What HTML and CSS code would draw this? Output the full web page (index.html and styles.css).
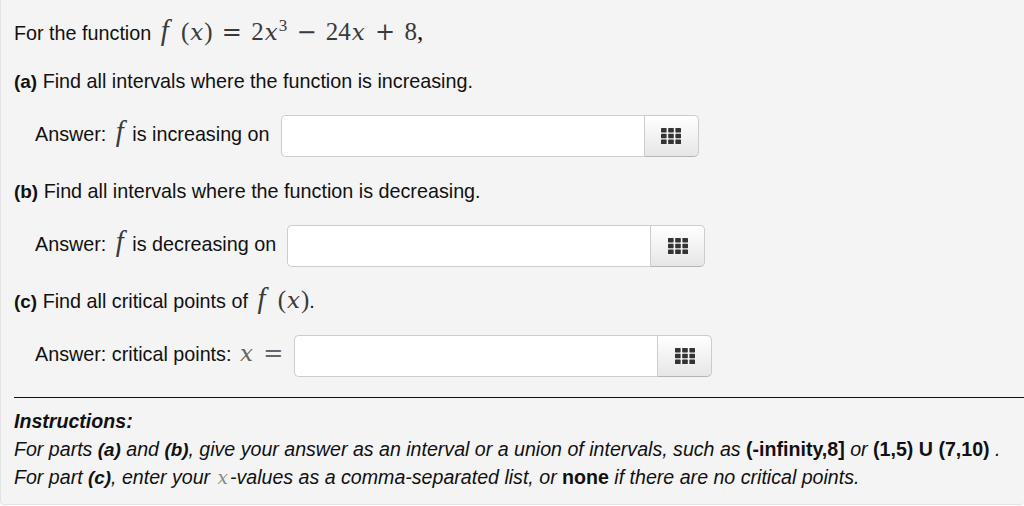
FILE: index.html
```html
<!DOCTYPE html>
<html>
<head>
  <meta charset="UTF-8" />
  <title>Question</title>
  <link rel="stylesheet" href="styles.css">
</head>
<body>
  <div class="container">
    <p class="line first">For the function <span class="math big"><i class="fn">f</i> (<i>x</i>) <span class="op">=</span> 2<i>x</i><sup>3</sup> <span class="op">−</span> 24<i>x</i> <span class="op">+</span> 8<span class="comma">,</span></span></p>
    <p class="line part"><b>(a)</b> Find all intervals where the function is increasing.</p>
    <div class="answer">
      <span class="label">Answer: <span class="math big"><i class="fn">f</i></span> is increasing on</span>
      <div class="field"><input type="text"><button type="button"><svg width="20" height="16" viewBox="0 0 20 16"><use href="#dots"/></svg></button></div>
    </div>
    <p class="line part"><b>(b)</b> Find all intervals where the function is decreasing.</p>
    <div class="answer">
      <span class="label">Answer: <span class="math big"><i class="fn">f</i></span> is decreasing on</span>
      <div class="field"><input type="text"><button type="button"><svg width="20" height="16" viewBox="0 0 20 16"><use href="#dots"/></svg></button></div>
    </div>
    <p class="line part"><b>(c)</b> Find all critical points of <span class="math big"><i class="fn">f</i> (<i>x</i>)</span>.</p>
    <div class="answer">
      <span class="label">Answer: critical points: <span class="math big faint"><i>x</i> <span class="op">=</span></span></span>
      <div class="field"><input type="text"><button type="button"><svg width="20" height="16" viewBox="0 0 20 16"><use href="#dots"/></svg></button></div>
    </div>
    <hr>
    <div class="instructions">
      <p><b class="title">Instructions:</b></p>
      <p>For parts <b>(a)</b> and <b>(b)</b>, give your answer as an interval or a union of intervals, such as <b class="up">(-infinity,8]</b> or <b class="up">(1,5) U (7,10)</b> .</p>
      <p>For part <b>(c)</b>, enter your <span class="math small"><i>x</i></span>-values as a comma-separated list, or <b class="up">none</b> if there are no critical points.</p>
    </div>
  </div>
  <svg width="0" height="0" class="defs">
    <g id="dots" fill="#333">
      <rect x="0" y="0" width="5.6" height="4.4" rx="0.6"/><rect x="7.2" y="0" width="5.6" height="4.4" rx="0.6"/><rect x="14.4" y="0" width="5.6" height="4.4" rx="0.6"/>
      <rect x="0" y="5.8" width="5.6" height="4.4" rx="0.6"/><rect x="7.2" y="5.8" width="5.6" height="4.4" rx="0.6"/><rect x="14.4" y="5.8" width="5.6" height="4.4" rx="0.6"/>
      <rect x="0" y="11.6" width="5.6" height="4.4" rx="0.6"/><rect x="7.2" y="11.6" width="5.6" height="4.4" rx="0.6"/><rect x="14.4" y="11.6" width="5.6" height="4.4" rx="0.6"/>
    </g>
  </svg>
</body>
</html>
```

FILE: styles.css
```css
body {
  margin: 0;
  background-color: #fff;
  font-family: "Liberation Sans", Arial, sans-serif;
  font-size: 19.75px;
  color: #111;
}

.defs {
  display: block;
}

.container {
  height: 505px;
  box-sizing: border-box;
  padding: 19px 0 0 13px;
  background-color: #f4f4f4;
  border-left: 1px solid #e3e3e3;
  border-bottom: 1px solid #e3e3e3;
  border-radius: 0 0 4px 4px;
}

p {
  margin: 0;
}

b {
  font-size: 0.96em;
  line-height: 0;
}

.line {
  height: 28px;
  line-height: 28px;
  white-space: nowrap;
}

.part {
  margin-top: 20px;
}

.math {
  font-family: "Liberation Serif", "DejaVu Serif", serif;
  color: #3a3a3a;
  line-height: 0;
}

.math i {
  font-family: "DejaVu Serif", serif;
  font-size: 0.92em;
  line-height: 0;
  margin: 0 1px;
}

.math .fn {
  font-family: "Liberation Serif", serif;
  font-size: 1.15em;
  margin: 0 3px 0 2px;
}

.big {
  font-size: 25px;
  word-spacing: 3px;
  margin-left: 2px;
}

.op {
  font-family: "DejaVu Serif", serif;
  font-size: 24px;
}

.comma {
  color: #111;
}

.faint {
  color: #666;
}

.small {
  font-size: 20px;
  color: #888;
}

.small i {
  margin: 0 2px;
}

.math sup {
  font-size: 17px;
  line-height: 0;
}

.answer {
  display: flex;
  align-items: center;
  gap: 11px;
  height: 42px;
  margin-top: 20px;
  margin-left: 21px;
  white-space: nowrap;
}

.label {
  margin-bottom: 3px;
}

.field {
  display: flex;
  height: 42px;
}

.field input {
  box-sizing: border-box;
  width: 363px;
  height: 42px;
  padding: 0;
  border: 1px solid #ccc;
  border-right: none;
  border-radius: 5px 0 0 5px;
  background-color: #fff;
}

.field button {
  box-sizing: border-box;
  width: 55px;
  height: 42px;
  padding: 0;
  display: flex;
  align-items: center;
  justify-content: center;
  border: 1px solid #ccc;
  border-bottom-color: #b5b5b5;
  border-radius: 0 5px 5px 0;
  background: linear-gradient(#fff, #e6e6e6);
}

hr {
  height: 1px;
  margin: 20px 0 0 0;
  border: none;
  background-color: #111;
}

.instructions {
  margin-top: 9px;
  font-size: 19.6px;
  font-style: italic;
  line-height: 28px;
  white-space: nowrap;
}

.title {
  font-size: 1em;
}

.up {
  font-style: normal;
  font-size: 1em;
}
```
